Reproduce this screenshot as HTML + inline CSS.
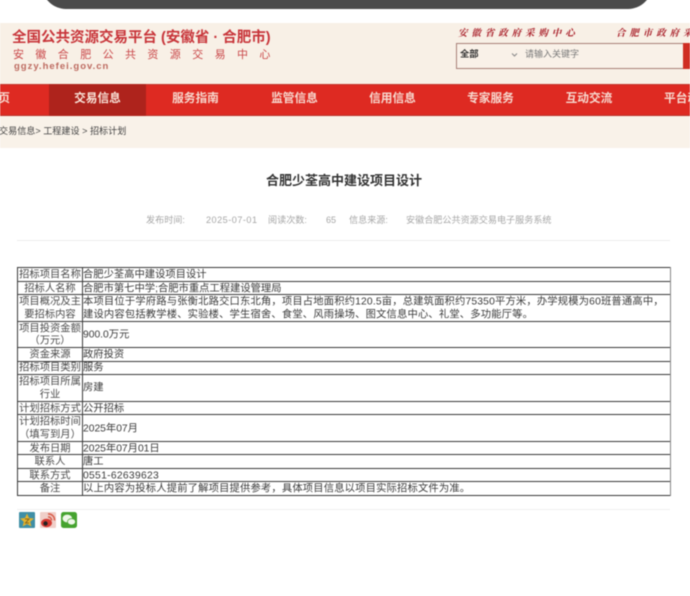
<!DOCTYPE html>
<html lang="zh">
<head>
<meta charset="utf-8">
<title>合肥少荃高中建设项目设计</title>
<style>
html,body{margin:0;padding:0;background:#fff;}
body{width:690px;height:596px;position:relative;overflow:hidden;font-family:"Liberation Sans","Noto Sans CJK SC",sans-serif;}
.a{position:absolute;white-space:nowrap;}
.r{left:0;width:690px;}
.n{top:91px;font-size:11.7px;font-weight:700;color:#f7d9cf;line-height:16px;width:90px;text-align:center;}
.h{left:17px;height:1px;width:653px;background:#3a3a3a;}
.l{left:83px;font-size:10.3px;color:#3a3a3a;line-height:13px;transform:translateY(.6px);}
.c{left:18px;width:64px;text-align:center;font-size:10.3px;color:#4a4a4a;line-height:13px;transform:translateY(.6px);}
.m{top:214px;font-size:9.1px;color:#a6a6a6;line-height:12px;}
.wrap{position:absolute;left:0;top:0;width:690px;height:596px;filter:blur(.45px);}
</style>
</head>
<body>
<div class="wrap">
<div class="a" style="left:42px;top:-20px;width:610px;height:29px;background:#4a4a4a;border-radius:0 0 24px 24px;"></div>

<div class="a r" style="top:23px;height:61px;background:#f8f0e6;"></div>
<div class="a" style="left:12px;top:29px;font-size:14.5px;font-weight:700;color:#c8353a;line-height:18px;">全国公共资源交易平台 (安徽省 · 合肥市)</div>
<div class="a" style="left:13px;top:48px;font-size:11px;color:#c9484a;line-height:14px;letter-spacing:11.4px;">安徽合肥公共资源交易中心</div>
<div class="a" style="left:14px;top:61px;font-size:9.5px;font-weight:700;color:#bd6a60;line-height:12px;letter-spacing:1px;">ggzy.hefei.gov.cn</div>

<div class="a" style="left:458px;top:28px;font-size:9.5px;font-weight:700;font-style:italic;color:#a81e28;line-height:13px;letter-spacing:3.9px;font-family:'Liberation Serif','Noto Serif CJK SC',serif;">安徽省政府采购中心</div>
<div class="a" style="left:616px;top:28px;font-size:9.5px;font-weight:700;font-style:italic;color:#a81e28;line-height:13px;letter-spacing:3.9px;font-family:'Liberation Serif','Noto Serif CJK SC',serif;">合肥市政府采购</div>
<div class="a" style="left:456px;top:43px;width:226px;height:24px;border:1px solid #a88078;background:#f9f1e8;"></div>
<div class="a" style="left:460px;top:48px;font-size:9.3px;font-weight:700;color:#333;line-height:13px;">全部</div>
<svg class="a" style="left:511px;top:52px;" width="7" height="6" viewBox="0 0 7 6"><path d="M1 1.5 L3.5 4 L6 1.5" fill="none" stroke="#888" stroke-width="1"/></svg>
<div class="a" style="left:525px;top:48px;font-size:9px;color:#777;line-height:13px;">请输入关键字</div>
<div class="a" style="left:683px;top:43px;width:7px;height:26px;background:#cf2d22;"></div>

<div class="a r" style="top:84px;height:32px;background:#de2a22;border-top:1px solid #c4342a;border-bottom:1px solid #b8322a;box-sizing:border-box;"></div>
<div class="a" style="left:49px;top:84px;width:97px;height:32px;background:#ae231c;"></div>
<div class="a n" style="left:-45px;width:55px;text-align:right;">首页</div>
<div class="a n" style="left:52.5px;color:#f9e3d8;">交易信息</div>
<div class="a n" style="left:150.5px;">服务指南</div>
<div class="a n" style="left:249.5px;">监管信息</div>
<div class="a n" style="left:347.5px;">信用信息</div>
<div class="a n" style="left:445.5px;">专家服务</div>
<div class="a n" style="left:544px;">互动交流</div>
<div class="a n" style="left:664px;width:60px;text-align:left;">平台动态</div>

<div class="a r" style="top:116px;height:32px;background:#f9f2e9;"></div>
<div class="a" style="left:-1px;top:125px;font-size:9.1px;color:#444;line-height:13px;">交易信息&gt; 工程建设 &gt; 招标计划</div>

<div class="a" style="left:0;top:172px;width:688px;text-align:center;font-size:13px;font-weight:700;color:#333;line-height:17px;">合肥少荃高中建设项目设计</div>

<div class="a m" style="left:146px;">发布时间:</div>
<div class="a m" style="left:206px;letter-spacing:.5px;">2025-07-01</div>
<div class="a m" style="left:268px;">阅读次数:</div>
<div class="a m" style="left:326px;">65</div>
<div class="a m" style="left:349px;">信息来源:</div>
<div class="a m" style="left:406px;">安徽合肥公共资源交易电子服务系统</div>
<div class="a" style="left:17px;top:240px;width:653px;height:1px;background:#ececec;"></div>

<!-- table lines -->
<div class="a h" style="top:267px;"></div>
<div class="a h" style="top:281px;"></div>
<div class="a h" style="top:294px;"></div>
<div class="a h" style="top:321px;"></div>
<div class="a h" style="top:347px;"></div>
<div class="a h" style="top:361px;"></div>
<div class="a h" style="top:374px;"></div>
<div class="a h" style="top:401px;"></div>
<div class="a h" style="top:414px;"></div>
<div class="a h" style="top:441px;"></div>
<div class="a h" style="top:454px;"></div>
<div class="a h" style="top:468px;"></div>
<div class="a h" style="top:481px;"></div>
<div class="a h" style="top:495px;"></div>
<div class="a" style="left:17px;top:267px;width:1px;height:229px;background:#3a3a3a;"></div>
<div class="a" style="left:82px;top:267px;width:1px;height:229px;background:#3a3a3a;"></div>
<div class="a" style="left:670px;top:267px;width:1px;height:229px;background:#888;"></div>

<div class="a c" style="top:267.5px;">招标项目名称</div>
<div class="a l" style="top:267.5px;">合肥少荃高中建设项目设计</div>
<div class="a c" style="top:281.5px;">招标人名称</div>
<div class="a l" style="top:281.5px;">合肥市第七中学;合肥市重点工程建设管理局</div>
<div class="a c" style="top:294.5px;">项目概况及主</div>
<div class="a c" style="top:307.5px;">要招标内容</div>
<div class="a l" style="top:294.5px;letter-spacing:.17px;">本项目位于学府路与张衡北路交口东北角，项目占地面积约120.5亩，总建筑面积约75350平方米，办学规模为60班普通高中，</div>
<div class="a l" style="top:307.5px;letter-spacing:.17px;">建设内容包括教学楼、实验楼、学生宿舍、食堂、风雨操场、图文信息中心、礼堂、多功能厅等。</div>
<div class="a c" style="top:321.5px;">项目投资金额</div>
<div class="a c" style="top:334px;">（万元）</div>
<div class="a l" style="top:328px;">900.0万元</div>
<div class="a c" style="top:347.5px;">资金来源</div>
<div class="a l" style="top:347.5px;">政府投资</div>
<div class="a c" style="top:361px;">招标项目类别</div>
<div class="a l" style="top:361px;">服务</div>
<div class="a c" style="top:374.5px;">招标项目所属</div>
<div class="a c" style="top:387.5px;">行业</div>
<div class="a l" style="top:381px;">房建</div>
<div class="a c" style="top:401.5px;">计划招标方式</div>
<div class="a l" style="top:401.5px;">公开招标</div>
<div class="a c" style="top:414.5px;">计划招标时间</div>
<div class="a c" style="top:427.5px;">（填写到月）</div>
<div class="a l" style="top:421.5px;">2025年07月</div>
<div class="a c" style="top:441.5px;">发布日期</div>
<div class="a l" style="top:441.5px;">2025年07月01日</div>
<div class="a c" style="top:455px;">联系人</div>
<div class="a l" style="top:455px;">唐工</div>
<div class="a c" style="top:468.5px;">联系方式</div>
<div class="a l" style="top:468.5px;letter-spacing:.3px;">0551-62639623</div>
<div class="a c" style="top:481.5px;">备注</div>
<div class="a l" style="top:481.5px;letter-spacing:.17px;">以上内容为投标人提前了解项目提供参考，具体项目信息以项目实际招标文件为准。</div>

<div class="a" style="left:17px;top:509px;width:653px;height:1px;background:#f0f0f0;"></div>

<!-- share icons -->
<svg class="a" style="left:19px;top:512px;" width="16" height="16" viewBox="0 0 16 16">
<rect width="16" height="16" rx="1" fill="#3f8fa6"/>
<path d="M8 1.5 L10 6 L15 6.5 L11.2 9.7 L12.4 14.5 L8 12 L3.6 14.5 L4.8 9.7 L1 6.5 L6 6 Z" fill="#e3b32e"/>
<path d="M6 7 H10 L6.5 11 H10" fill="none" stroke="#8a6a1e" stroke-width="1"/>
</svg>
<svg class="a" style="left:40px;top:512px;" width="16" height="16" viewBox="0 0 16 16">
<rect width="16" height="16" rx="1" fill="#f0cfc9"/>
<path d="M8 2 A6 6 0 0 1 14.5 8.5 M8 5 A3.2 3.2 0 0 1 11.5 8.5" fill="none" stroke="#d9614e" stroke-width="1.6"/>
<ellipse cx="6.5" cy="11" rx="5.5" ry="4.2" fill="#d43a32"/>
<circle cx="5.5" cy="11.5" r="2.2" fill="#222"/>
</svg>
<svg class="a" style="left:61px;top:512px;" width="16" height="16" viewBox="0 0 16 16">
<rect width="16" height="16" rx="2.5" fill="#45a32f"/>
<ellipse cx="6.3" cy="6.5" rx="4.8" ry="3.9" fill="#eef7e8"/>
<ellipse cx="10.5" cy="9.8" rx="4" ry="3.2" fill="#eef7e8" stroke="#45a32f" stroke-width=".7"/>
</svg>
</div>
</body>
</html>
